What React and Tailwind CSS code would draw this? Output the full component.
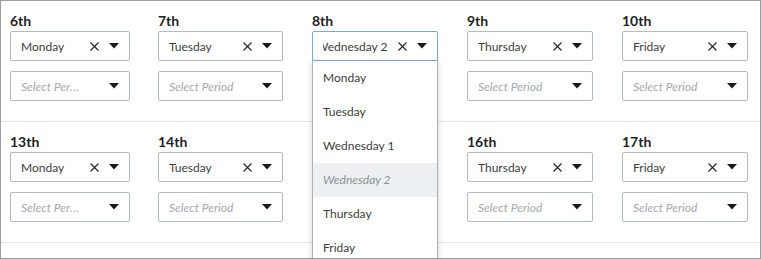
const rows = [
  [
    { label: '6th', day: 'Monday', w: 120, col: 148 },
    { label: '7th', day: 'Tuesday', w: 125, col: 154 },
    { label: '8th', day: 'Wednesday 2', w: 126, col: 155, open: true },
    { label: '9th', day: 'Thursday', w: 126, col: 155 },
    { label: '10th', day: 'Friday', w: 126, col: 155 },
  ],
  [
    { label: '13th', day: 'Monday', w: 120, col: 148 },
    { label: '14th', day: 'Tuesday', w: 125, col: 154 },
    { label: '15th', day: 'Wednesday 2', w: 126, col: 155 },
    { label: '16th', day: 'Thursday', w: 126, col: 155 },
    { label: '17th', day: 'Friday', w: 126, col: 155 },
  ],
  [
    { label: '20th', day: 'Monday', w: 120, col: 148 },
    { label: '21st', day: 'Tuesday', w: 125, col: 154 },
    { label: '22nd', day: 'Wednesday 2', w: 126, col: 155 },
    { label: '23rd', day: 'Thursday', w: 126, col: 155 },
    { label: '24th', day: 'Friday', w: 126, col: 155 },
  ],
];

const options = ['Monday', 'Tuesday', 'Wednesday 1', 'Wednesday 2', 'Thursday', 'Friday'];

const Caret = () => (
  <svg width="10" height="6" viewBox="0 0 10 6" className="shrink-0">
    <path d="M0 0 L10 0 L5 5.5 Z" fill="#1a1a1a" />
  </svg>
);

const Cross = () => (
  <svg width="9" height="9" viewBox="0 0 9 9" className="shrink-0">
    <path d="M0.5 0.5 L8.5 8.5 M8.5 0.5 L0.5 8.5" stroke="#222" strokeWidth="1.1" />
  </svg>
);

const DaySelect = ({ day, w, open }) => (
  <div className="relative" style={{ width: w }}>
    <div
      className={`h-[30px] flex items-center border rounded-[2px] bg-white pl-[10px] ${
        open ? 'border-[#7aa7dc] rounded-b-none' : 'border-[#b3bac1]'
      }`}
    >
      <div className="flex-1 min-w-0 overflow-hidden whitespace-nowrap text-[12px] text-[#3d3d3d] pt-[2px]">
        <span className={open ? 'inline-block ml-[-7px]' : ''}>{day}</span>
      </div>
      <div className="flex items-center pr-[10px] pl-[4px]">
        <Cross />
        <span className="w-[10px]" />
        <Caret />
      </div>
    </div>
    {open && (
      <div className="absolute left-0 top-[30px] z-10 bg-white border border-t-0 border-[#a9b1b9] shadow-[0_2px_6px_rgba(0,0,0,0.18)]" style={{ width: w }}>
        {options.map(o => (
          <div
            key={o}
            className={`h-[34px] flex items-center pl-[10px] text-[12px] ${
              o === day ? 'bg-[#edf0f3] italic text-[#8a9096]' : 'text-[#3d3d3d]'
            }`}
          >
            {o}
          </div>
        ))}
      </div>
    )}
  </div>
);

const PeriodSelect = ({ w }) => (
  <div
    className="h-[30px] flex items-center border border-[#b3bac1] rounded-[2px] bg-white pl-[10px]"
    style={{ width: w }}
  >
    <div className="flex-1 min-w-0 overflow-hidden whitespace-nowrap text-ellipsis text-[12px] italic text-[#a3a9b0] pt-[2px]">
      Select Period
    </div>
    <div className={`${w === 120 ? 'w-[48px]' : 'w-[40px]'} shrink-0 flex items-center justify-end pr-[10px]`}>
      <Caret />
    </div>
  </div>
);

export default function App() {
  return (
    <div
      className="w-[761px] h-[259px] overflow-hidden border border-[#9e9e9e] bg-white"
      style={{ fontFamily: 'Lato, "Liberation Sans", sans-serif' }}
    >
      {rows.map((row, i) => (
        <div key={i} className="h-[121px] border-b border-[#e1e5e9] pl-[9px] pt-[10px] flex">
          {row.map(c => (
            <div key={c.label} className="shrink-0" style={{ width: c.col }}>
              <div className="h-[20px] leading-[20px] text-[14px] font-bold text-[#1f1f1f]">{c.label}</div>
              <DaySelect day={c.day} w={c.w} open={c.open} />
              <div className="h-[10px]" />
              <PeriodSelect w={c.w} />
            </div>
          ))}
        </div>
      ))}
    </div>
  );
}
